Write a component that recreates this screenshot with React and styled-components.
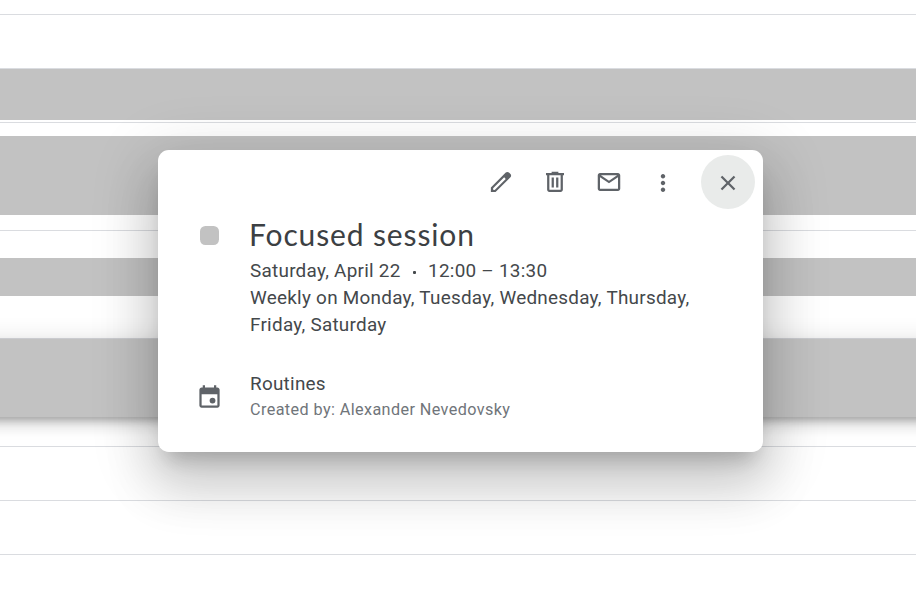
import React from 'react';
import styled, { createGlobalStyle } from 'styled-components';

const GlobalStyle = createGlobalStyle`
  * {
    box-sizing: border-box;
  }
  body {
    margin: 0;
    background: #fff;
    font-family: Roboto, 'Liberation Sans', sans-serif;
  }
`;

const Page = styled.main`
  display: grid;
  width: 916px;
  height: 600px;
  overflow: hidden;
`;

/* hour lines repeat every 54px */
const DayColumn = styled.div`
  grid-area: 1 / 1;
  background: repeating-linear-gradient(
    to bottom,
    #fff 0 14px,
    #dadce0 14px 15px,
    #fff 15px 54px
  );
`;

const Blocks = styled.div`
  display: flow-root;
  margin: 0 -40px;
`;

const Block = styled.div`
  height: ${props => props.$height}px;
  margin-top: ${props => props.$gap}px;
  background: #c2c2c2;
  box-shadow: ${props =>
    props.$raised
      ? '0 8.1px 13.5px rgba(0, 0, 0, 0.14), 0 1.35px 24.3px rgba(0, 0, 0, 0.12), 0 4.05px 6.75px -1.35px rgba(0, 0, 0, 0.2)'
      : 'none'};
`;

const Card = styled.section`
  grid-area: 1 / 1;
  z-index: 1;
  width: 605px;
  height: 302px;
  margin: 150px 0 0 158px;
  border-radius: 10.8px;
  background: #fff;
  color: #44484b;
  box-shadow: 0 32.4px 51.3px 4.05px rgba(0, 0, 0, 0.14),
    0 12.15px 62.1px 10.8px rgba(0, 0, 0, 0.12),
    0 14.85px 20.25px -9.45px rgba(0, 0, 0, 0.2);
`;

const Toolbar = styled.div`
  display: flex;
  justify-content: flex-end;
  padding: 5px 8px 0 0;
`;

const IconButton = styled.button`
  display: flex;
  align-items: center;
  justify-content: center;
  width: 54px;
  height: 54px;
  margin: 0 0 0 ${props => (props.$active ? 11 : 0)}px;
  padding: ${props => props.$drop || 0}px 0 0;
  border: 0;
  border-radius: 50%;
  background: ${props => (props.$active ? '#e9ebea' : 'transparent')};
  color: #5f6368;
`;

const Icon = styled.svg`
  display: block;
  width: ${props => props.$size}px;
  height: ${props => props.$size}px;
  fill: currentColor;
`;

const Row = styled.div`
  display: grid;
  grid-template-columns: 92px 1fr;
  margin-top: ${props => props.$gap}px;
`;

const Marker = styled.div`
  padding: ${props => props.$top}px 0 0 ${props => props.$left}px;
  color: #5f6368;
`;

const Swatch = styled.div`
  width: 19px;
  height: 19px;
  border-radius: 5.4px;
  background: #c2c2c2;
`;

const Title = styled.h1`
  margin: 0;
  padding-bottom: 6px;
  color: #3c4043;
  font: 400 30px/34px Lato, sans-serif;
  letter-spacing: 0.87px;
  text-indent: -1px;
`;

const Text = styled.p`
  margin: 0;
  font-size: 18.9px;
  line-height: 27px;
  letter-spacing: 0.26px;
`;

const Dot = styled.span`
  display: inline-block;
  width: 3px;
  height: 3px;
  margin: 0 12px 3px 12.5px;
  border-radius: 1px;
  background: currentColor;
`;

const Note = styled.p`
  margin: 0;
  padding-top: 2px;
  color: #70757a;
  font-size: 16.2px;
  line-height: 22px;
  letter-spacing: 0.4px;
`;

const icons = {
  edit:
    'M20.41 4.94l-1.35-1.35c-.78-.78-2.05-.78-2.83 0L3 16.82V21h4.18L20.41 7.77c.79-.78.79-2.05 0-2.83zm-14 14.12L5 19v-1.36l9.82-9.82 1.41 1.41-9.82 9.83z',
  trash:
    'M15 4V3H9v1H4v2h1v13c0 1.1.9 2 2 2h10c1.1 0 2-.9 2-2V6h1V4h-5zm2 15H7V6h10v13zM9 8h2v9H9zm4 0h2v9h-2z',
  mail:
    'M20 4H4c-1.1 0-2 .9-2 2v12c0 1.1.9 2 2 2h16c1.1 0 2-.9 2-2V6c0-1.1-.9-2-2-2zm-.8 2L12 10.8 4.8 6h14.4zM4 18V7.87l8 5.33 8-5.33V18H4z',
  more:
    'M12 8c1.1 0 2-.9 2-2s-.9-2-2-2-2 .9-2 2 .9 2 2 2zm0 2c-1.1 0-2 .9-2 2s.9 2 2 2 2-.9 2-2-.9-2-2-2zm0 6c-1.1 0-2 .9-2 2s.9 2 2 2 2-.9 2-2-.9-2-2-2z',
  close:
    'M18.5 6.9L17.1 5.5 12 10.6 6.9 5.5 5.5 6.9 10.6 12 5.5 17.1 6.9 18.5 12 13.4 17.1 18.5 18.5 17.1 13.4 12z',
  calendar:
    'M19 4h-1V2h-2v2H8V2H6v2H5c-1.1 0-2 .9-2 2v14c0 1.1.9 2 2 2h14c1.1 0 2-.9 2-2V6c0-1.1-.9-2-2-2zm0 16H5V10h14v10zM14.7 13a2.6 2.6 0 1 0 0 5.2 2.6 2.6 0 0 0 0-5.2z',
};

const Glyph = ({ name, size = 27, viewBox = '0 0 24 24' }) => (
  <Icon viewBox={viewBox} $size={size} aria-hidden='true'>
    <path d={icons[name]} fillRule='evenodd' />
  </Icon>
);

const actions = [
  { name: 'edit', label: 'Edit event' },
  { name: 'trash', label: 'Delete event' },
  { name: 'mail', label: 'Email guests' },
  { name: 'more', label: 'Options', drop: 2 },
  { name: 'close', label: 'Close', drop: 2, active: true },
];

const App = () => {
  return (
    <>
      <GlobalStyle />
      <Page>
        <DayColumn>
          <Blocks>
            <Block $gap={69} $height={51} />
            <Block $gap={16} $height={79} />
            <Block $gap={43} $height={38} />
            <Block $gap={43} $height={78} $raised />
          </Blocks>
        </DayColumn>
        <Card>
          <Toolbar>
            {actions.map(item => (
              <IconButton
                key={item.name}
                aria-label={item.label}
                $drop={item.drop}
                $active={item.active}
              >
                <Glyph
                  name={item.name}
                  size={28}
                  viewBox='-0.444 -0.444 24.889 24.889'
                />
              </IconButton>
            ))}
          </Toolbar>
          <Row $gap={8}>
            <Marker $top={9} $left={42}>
              <Swatch />
            </Marker>
            <div>
              <Title>Focused session</Title>
              <Text>
                Saturday, April 22<Dot />12:00 – 13:30
              </Text>
              <Text>
                Weekly on Monday, Tuesday, Wednesday, Thursday,
                <br />
                Friday, Saturday
              </Text>
            </div>
          </Row>
          <Row $gap={32}>
            <Marker $top={13} $left={38}>
              <Glyph name='calendar' />
            </Marker>
            <div>
              <Text>Routines</Text>
              <Note>Created by: Alexander Nevedovsky</Note>
            </div>
          </Row>
        </Card>
      </Page>
    </>
  );
};

export default App;
